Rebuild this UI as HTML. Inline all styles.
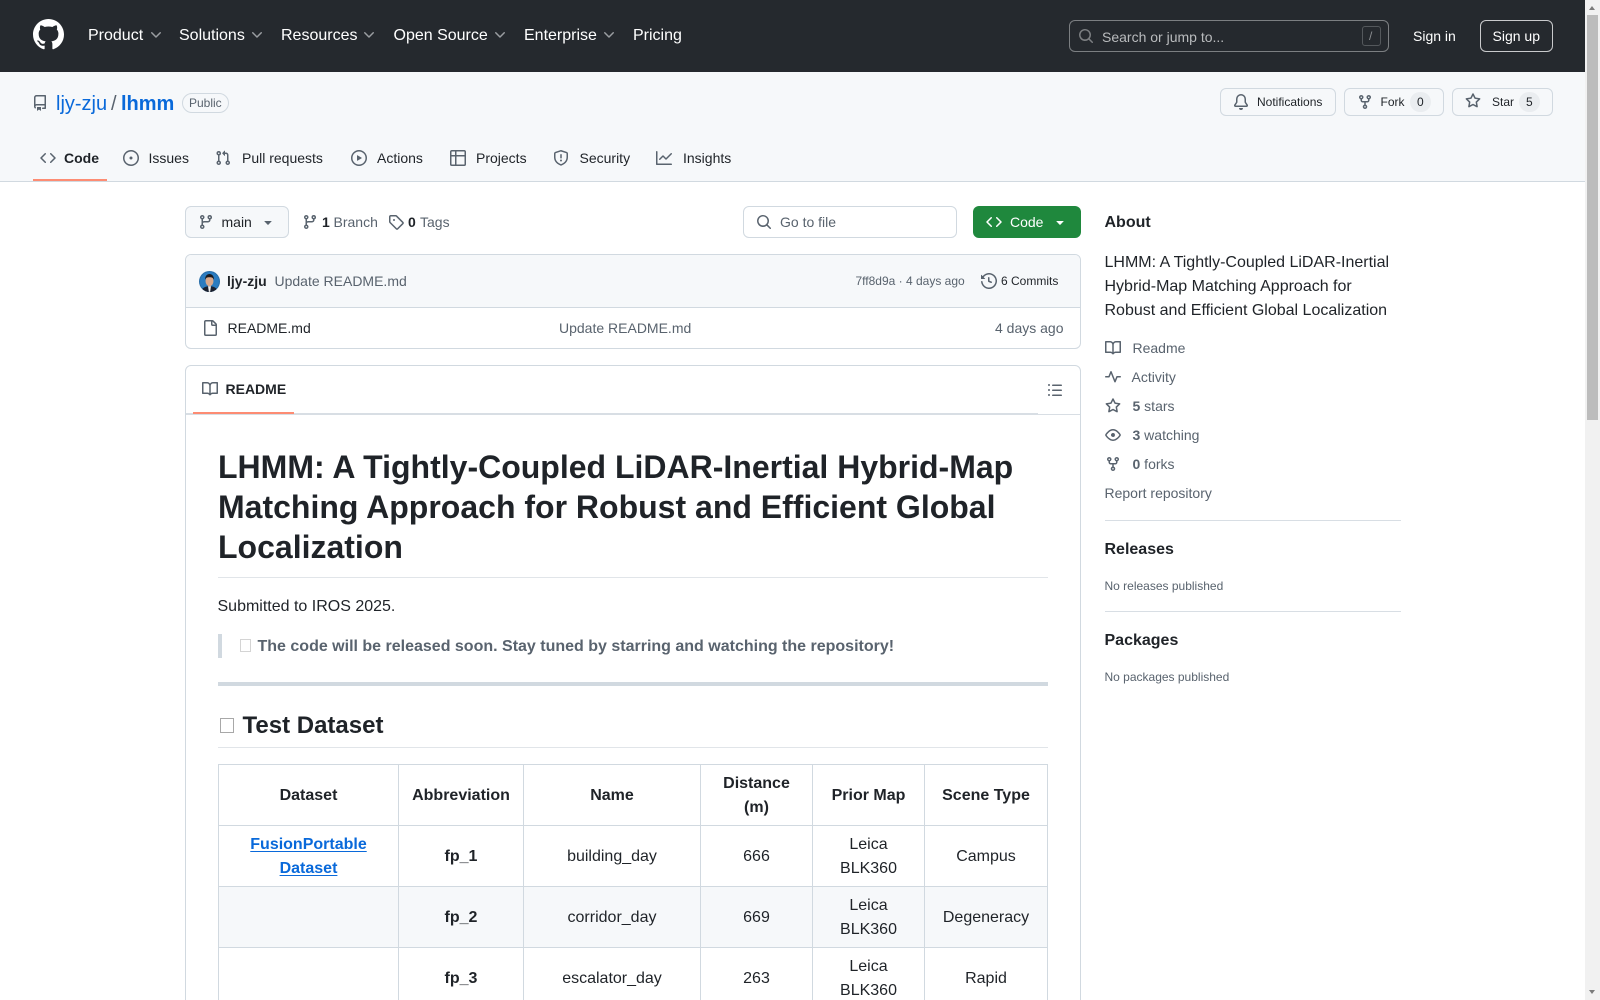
<!DOCTYPE html>
<html lang="en"><head><meta charset="utf-8"><title>ljy-zju/lhmm</title>
<style>
*{box-sizing:border-box}
html,body{margin:0;padding:0;width:1600px;height:1000px;overflow:hidden;background:#fff}
body{font-family:"Liberation Sans",Arial,sans-serif;font-size:14px;color:#1f2328;position:relative}
.t{position:absolute;white-space:nowrap;line-height:20px}
.b{position:absolute}
svg.i{position:absolute;display:block;overflow:visible}
.m{color:#59636e}
.w{font-size:16px;color:#fff}
.s{font-weight:700}
a{color:inherit;text-decoration:none}
.clip{position:absolute;left:0;top:0;width:1600px;height:1000px;overflow:hidden}
table{position:absolute;left:218px;top:764px;width:829px;border-collapse:collapse;table-layout:fixed;font-size:16px;line-height:24px;text-align:center;color:#1f2328}
th,td{border:1px solid #d1d9e0;padding:7px 13px 5px;font-weight:400;overflow:hidden}
th{font-weight:700}
tr.z td{background:#f6f8fa}
table a{color:#0969da;font-weight:700;text-decoration:underline;text-underline-offset:2px}
</style></head><body>
<svg width="0" height="0" style="position:absolute"><defs>
<symbol id="mark" viewBox="0 0 16 16"><path d="M8 0c4.42 0 8 3.58 8 8a8.013 8.013 0 0 1-5.45 7.59c-.4.08-.55-.17-.55-.38 0-.27.01-1.13.01-2.2 0-.75-.25-1.23-.54-1.48 1.78-.2 3.65-.88 3.65-3.95 0-.88-.31-1.59-.82-2.15.08-.2.36-1.02-.08-2.12 0 0-.67-.22-2.2.82-.64-.18-1.32-.27-2-.27-.68 0-1.36.09-2 .27-1.53-1.03-2.2-.82-2.2-.82-.44 1.1-.16 1.92-.08 2.12-.51.56-.82 1.28-.82 2.15 0 3.06 1.86 3.75 3.64 3.95-.23.2-.44.55-.51 1.07-.46.21-1.61.55-2.33-.66-.15-.24-.6-.83-1.23-.82-.67.01-.27.38.01.53.34.19.73.9.82 1.13.16.45.68 1.31 2.69.94 0 .67.01 1.3.01 1.49 0 .21-.15.45-.55.38A7.995 7.995 0 0 1 0 8c0-4.42 3.58-8 8-8Z"/></symbol>
<symbol id="chev" viewBox="0 0 16 16"><path d="M12.78 5.22a.749.749 0 0 1 0 1.06l-4.25 4.25a.749.749 0 0 1-1.06 0L3.22 6.28a.749.749 0 1 1 1.06-1.06L8 8.939l3.72-3.719a.749.749 0 0 1 1.06 0Z"/></symbol>
<symbol id="tri" viewBox="0 0 16 16"><path d="m4.427 7.427 3.396 3.396a.25.25 0 0 0 .354 0l3.396-3.396A.25.25 0 0 0 11.396 7H4.604a.25.25 0 0 0-.177.427Z"/></symbol>
<symbol id="repo" viewBox="0 0 16 16"><path d="M2 2.5A2.5 2.5 0 0 1 4.5 0h8.75a.75.75 0 0 1 .75.75v12.5a.75.75 0 0 1-.75.75h-2.5a.75.75 0 0 1 0-1.5h1.75v-2h-8a1 1 0 0 0-.714 1.7.75.75 0 1 1-1.072 1.05A2.495 2.495 0 0 1 2 11.5Zm10.5-1h-8a1 1 0 0 0-1 1v6.708A2.486 2.486 0 0 1 4.5 9h8ZM5 12.25a.25.25 0 0 1 .25-.25h3.5a.25.25 0 0 1 .25.25v3.25a.25.25 0 0 1-.4.2l-1.45-1.087a.249.249 0 0 0-.3 0L5.4 15.7a.25.25 0 0 1-.4-.2Z"/></symbol>
<symbol id="code" viewBox="0 0 16 16"><path d="m11.28 3.22 4.25 4.25a.75.75 0 0 1 0 1.06l-4.25 4.25a.749.749 0 0 1-1.275-.326.749.749 0 0 1 .215-.734L13.94 8l-3.72-3.72a.749.749 0 0 1 .326-1.275.749.749 0 0 1 .734.215Zm-6.56 0a.751.751 0 0 1 1.042.018.751.751 0 0 1 .018 1.042L2.06 8l3.72 3.72a.749.749 0 0 1-.326 1.275.749.749 0 0 1-.734-.215L.47 8.53a.75.75 0 0 1 0-1.06Z"/></symbol>
<symbol id="issue" viewBox="0 0 16 16"><path d="M8 9.5a1.5 1.5 0 1 0 0-3 1.5 1.5 0 0 0 0 3Z"/><path d="M8 0a8 8 0 1 1 0 16A8 8 0 0 1 8 0ZM1.5 8a6.5 6.5 0 1 0 13 0 6.5 6.5 0 0 0-13 0Z"/></symbol>
<symbol id="pr" viewBox="0 0 16 16"><path d="M1.5 3.25a2.25 2.25 0 1 1 3 2.122v5.256a2.251 2.251 0 1 1-1.5 0V5.372A2.25 2.25 0 0 1 1.5 3.25Zm5.677-.177L9.573.677A.25.25 0 0 1 10 .854V2.5h1A2.5 2.5 0 0 1 13.5 5v5.628a2.251 2.251 0 1 1-1.5 0V5a1 1 0 0 0-1-1h-1v1.646a.25.25 0 0 1-.427.177L7.177 3.427a.25.25 0 0 1 0-.354ZM3.75 2.5a.75.75 0 1 0 0 1.5.75.75 0 0 0 0-1.5Zm0 9.5a.75.75 0 1 0 0 1.5.75.75 0 0 0 0-1.5Zm8.25.75a.75.75 0 1 0 1.5 0 .75.75 0 0 0-1.5 0Z"/></symbol>
<symbol id="play" viewBox="0 0 16 16"><path d="M8 0a8 8 0 1 1 0 16A8 8 0 0 1 8 0ZM1.5 8a6.5 6.5 0 1 0 13 0 6.5 6.5 0 0 0-13 0Zm4.879-2.773 4.264 2.559a.25.25 0 0 1 0 .428l-4.264 2.559A.25.25 0 0 1 6 10.559V5.442a.25.25 0 0 1 .379-.215Z"/></symbol>
<symbol id="table" viewBox="0 0 16 16"><path d="M0 1.75C0 .784.784 0 1.75 0h12.5C15.216 0 16 .784 16 1.75v12.5A1.75 1.75 0 0 1 14.25 16H1.75A1.75 1.75 0 0 1 0 14.25ZM6.5 6.5v8h7.75a.25.25 0 0 0 .25-.25V6.5Zm8-1.5V1.75a.25.25 0 0 0-.25-.25H6.5V5Zm-13 1.5v7.75c0 .138.112.25.25.25H5v-8ZM5 5V1.5H1.75a.25.25 0 0 0-.25.25V5Z"/></symbol>
<symbol id="shield" viewBox="0 0 16 16"><path d="M7.467.133a1.748 1.748 0 0 1 1.066 0l5.25 1.68A1.75 1.75 0 0 1 15 3.48V7c0 1.566-.32 3.182-1.303 4.682-.983 1.498-2.585 2.813-5.032 3.855a1.697 1.697 0 0 1-1.33 0c-2.447-1.042-4.049-2.357-5.032-3.855C1.32 10.182 1 8.566 1 7V3.48a1.75 1.75 0 0 1 1.217-1.667Zm.61 1.429a.25.25 0 0 0-.153 0l-5.25 1.68a.25.25 0 0 0-.174.238V7c0 1.358.275 2.666 1.057 3.86.784 1.194 2.121 2.34 4.366 3.297a.196.196 0 0 0 .154 0c2.245-.956 3.582-2.104 4.366-3.298C13.225 9.666 13.5 8.36 13.5 7V3.48a.251.251 0 0 0-.174-.237l-5.25-1.68ZM8.75 4.75v3a.75.75 0 0 1-1.5 0v-3a.75.75 0 0 1 1.5 0ZM9 10.5a1 1 0 1 1-2 0 1 1 0 0 1 2 0Z"/></symbol>
<symbol id="graph" viewBox="0 0 16 16"><path d="M1.5 1.75V13.5h13.75a.75.75 0 0 1 0 1.5H.75a.75.75 0 0 1-.75-.75V1.75a.75.75 0 0 1 1.5 0Zm14.28 2.53-5.25 5.25a.75.75 0 0 1-1.06 0L7 7.06 4.28 9.78a.751.751 0 0 1-1.042-.018.751.751 0 0 1-.018-1.042l3.25-3.25a.75.75 0 0 1 1.06 0L10 7.94l4.72-4.72a.751.751 0 0 1 1.042.018.751.751 0 0 1 .018 1.042Z"/></symbol>
<symbol id="bell" viewBox="0 0 16 16"><path d="M8 16a2 2 0 0 0 1.985-1.75c.017-.137-.097-.25-.235-.25h-3.5c-.138 0-.252.113-.235.25A2 2 0 0 0 8 16ZM3 5a5 5 0 0 1 10 0v2.947c0 .05.015.098.042.139l1.703 2.555A1.519 1.519 0 0 1 13.482 13H2.518a1.516 1.516 0 0 1-1.263-2.36l1.703-2.554A.255.255 0 0 0 3 7.947Zm5-3.5A3.5 3.5 0 0 0 4.5 5v2.947c0 .346-.102.683-.294.97l-1.703 2.556a.017.017 0 0 0-.003.01l.001.006c0 .002.002.004.004.006l.006.004.007.001h10.964l.007-.001.006-.004.004-.006.001-.007a.017.017 0 0 0-.003-.01l-1.703-2.554a1.745 1.745 0 0 1-.294-.97V5A3.5 3.5 0 0 0 8 1.5Z"/></symbol>
<symbol id="fork" viewBox="0 0 16 16"><path d="M5 5.372v.878c0 .414.336.75.75.75h4.5a.75.75 0 0 0 .75-.75v-.878a2.25 2.25 0 1 1 1.5 0v.878a2.25 2.25 0 0 1-2.25 2.25h-1.5v2.128a2.251 2.251 0 1 1-1.5 0V8.5h-1.5A2.25 2.25 0 0 1 3.5 6.25v-.878a2.25 2.25 0 1 1 1.5 0ZM5 3.25a.75.75 0 1 0-1.5 0 .75.75 0 0 0 1.5 0Zm6.75.75a.75.75 0 1 0 0-1.5.75.75 0 0 0 0 1.5Zm-3 8.75a.75.75 0 1 0-1.5 0 .75.75 0 0 0 1.5 0Z"/></symbol>
<symbol id="star" viewBox="0 0 16 16"><path d="M8 .25a.75.75 0 0 1 .673.418l1.882 3.815 4.21.612a.75.75 0 0 1 .416 1.279l-3.046 2.97.719 4.192a.751.751 0 0 1-1.088.791L8 12.347l-3.766 1.98a.75.75 0 0 1-1.088-.79l.72-4.194L.818 6.374a.75.75 0 0 1 .416-1.28l4.21-.611L7.327.668A.75.75 0 0 1 8 .25Zm0 2.445L6.615 5.5a.75.75 0 0 1-.564.41l-3.097.45 2.24 2.184a.75.75 0 0 1 .216.664l-.528 3.084 2.769-1.456a.75.75 0 0 1 .698 0l2.77 1.456-.53-3.084a.75.75 0 0 1 .216-.664l2.24-2.183-3.096-.45a.75.75 0 0 1-.564-.41L8 2.694Z"/></symbol>
<symbol id="branch" viewBox="0 0 16 16"><path d="M9.5 3.25a2.25 2.25 0 1 1 3 2.122V6A2.5 2.5 0 0 1 10 8.5H6a1 1 0 0 0-1 1v1.128a2.251 2.251 0 1 1-1.5 0V5.372a2.25 2.25 0 1 1 1.5 0v1.836A2.493 2.493 0 0 1 6 7h4a1 1 0 0 0 1-1v-.628A2.25 2.25 0 0 1 9.5 3.25Zm-6 0a.75.75 0 1 0 1.5 0 .75.75 0 0 0-1.5 0Zm8.25-.75a.75.75 0 1 0 0 1.5.75.75 0 0 0 0-1.5ZM4.25 12a.75.75 0 1 0 0 1.5.75.75 0 0 0 0-1.5Z"/></symbol>
<symbol id="tag" viewBox="0 0 16 16"><path d="M1 7.775V2.75C1 1.784 1.784 1 2.75 1h5.025c.464 0 .91.184 1.238.513l6.25 6.25a1.75 1.75 0 0 1 0 2.474l-5.026 5.026a1.75 1.75 0 0 1-2.474 0l-6.25-6.25A1.75 1.75 0 0 1 1 7.775Zm1.5 0c0 .066.026.13.073.177l6.25 6.25a.25.25 0 0 0 .354 0l5.025-5.025a.25.25 0 0 0 0-.354l-6.25-6.25a.25.25 0 0 0-.177-.073H2.75a.25.25 0 0 0-.25.25ZM6 5a1 1 0 1 1 0 2 1 1 0 0 1 0-2Z"/></symbol>
<symbol id="search" viewBox="0 0 16 16"><path d="M10.68 11.74a6 6 0 0 1-7.922-8.982 6 6 0 0 1 8.982 7.922l3.04 3.04a.749.749 0 0 1-.326 1.275.749.749 0 0 1-.734-.215ZM11.5 7a4.499 4.499 0 1 0-8.997 0A4.499 4.499 0 0 0 11.5 7Z"/></symbol>
<symbol id="history" viewBox="0 0 16 16"><path d="m.427 1.927 1.215 1.215a8.002 8.002 0 1 1-1.6 5.685.75.75 0 1 1 1.493-.154 6.5 6.5 0 1 0 1.18-4.458l1.358 1.358A.25.25 0 0 1 3.896 6H.25A.25.25 0 0 1 0 5.75V2.104a.25.25 0 0 1 .427-.177ZM7.75 4a.75.75 0 0 1 .75.75v2.992l2.028.812a.75.75 0 0 1-.557 1.392l-2.5-1A.751.751 0 0 1 7 8.25v-3.5A.75.75 0 0 1 7.75 4Z"/></symbol>
<symbol id="file" viewBox="0 0 16 16"><path d="M2 1.75C2 .784 2.784 0 3.75 0h6.586c.464 0 .909.184 1.237.513l2.914 2.914c.329.328.513.773.513 1.237v9.586A1.75 1.75 0 0 1 13.25 16h-9.5A1.75 1.75 0 0 1 2 14.25Zm1.75-.25a.25.25 0 0 0-.25.25v12.5c0 .138.112.25.25.25h9.5a.25.25 0 0 0 .25-.25V6h-2.75A1.75 1.75 0 0 1 9 4.25V1.5Zm6.75.062V4.25c0 .138.112.25.25.25h2.688l-.011-.013-2.914-2.914-.013-.011Z"/></symbol>
<symbol id="book" viewBox="0 0 16 16"><path d="M0 1.75A.75.75 0 0 1 .75 1h4.253c1.227 0 2.317.59 3 1.501A3.743 3.743 0 0 1 11.006 1h4.245a.75.75 0 0 1 .75.75v10.5a.75.75 0 0 1-.75.75h-4.507a2.25 2.25 0 0 0-1.591.659l-.622.621a.75.75 0 0 1-1.06 0l-.622-.621A2.25 2.25 0 0 0 5.258 13H.75a.75.75 0 0 1-.75-.75Zm7.251 10.324.004-5.073-.002-2.253A2.25 2.25 0 0 0 5.003 2.5H1.5v9h3.757a3.75 3.75 0 0 1 1.994.574ZM8.755 4.75l-.004 7.322a3.752 3.752 0 0 1 1.992-.572H14.5v-9h-3.495a2.25 2.25 0 0 0-2.25 2.25Z"/></symbol>
<symbol id="list" viewBox="0 0 16 16"><path d="M5.75 2.5h8.5a.75.75 0 0 1 0 1.5h-8.5a.75.75 0 0 1 0-1.5Zm0 5h8.5a.75.75 0 0 1 0 1.5h-8.5a.75.75 0 0 1 0-1.5Zm0 5h8.5a.75.75 0 0 1 0 1.5h-8.5a.75.75 0 0 1 0-1.5ZM2 14a1 1 0 1 1 0-2 1 1 0 0 1 0 2Zm1-6a1 1 0 1 1-2 0 1 1 0 0 1 2 0ZM2 4a1 1 0 1 1 0-2 1 1 0 0 1 0 2Z"/></symbol>
<symbol id="pulse" viewBox="0 0 16 16"><path d="M6 2c.306 0 .582.187.696.471L10 10.731l1.304-3.26A.751.751 0 0 1 12 7h3.25a.75.75 0 0 1 0 1.5h-2.742l-1.812 4.528a.751.751 0 0 1-1.392 0L6 4.77 4.696 8.03A.75.75 0 0 1 4 8.5H.75a.75.75 0 0 1 0-1.5h2.742l1.812-4.529A.751.751 0 0 1 6 2Z"/></symbol>
<symbol id="eye" viewBox="0 0 16 16"><path d="M8 2c1.981 0 3.671.992 4.933 2.078 1.27 1.091 2.187 2.345 2.637 3.023a1.62 1.62 0 0 1 0 1.798c-.45.678-1.367 1.932-2.637 3.023C11.67 13.008 9.981 14 8 14c-1.981 0-3.671-.992-4.933-2.078C1.797 10.83.88 9.576.43 8.898a1.62 1.62 0 0 1 0-1.798c.45-.677 1.367-1.931 2.637-3.022C4.33 2.992 6.019 2 8 2ZM1.679 7.932a.12.12 0 0 0 0 .136c.411.622 1.241 1.75 2.366 2.717C5.176 11.758 6.527 12.5 8 12.5c1.473 0 2.825-.742 3.955-1.715 1.124-.967 1.954-2.096 2.366-2.717a.12.12 0 0 0 0-.136c-.412-.621-1.242-1.75-2.366-2.717C10.824 4.242 9.473 3.5 8 3.5c-1.473 0-2.825.742-3.955 1.715-1.124.967-1.954 2.096-2.366 2.717ZM8 10a2 2 0 1 1-.001-3.999A2 2 0 0 1 8 10Z"/></symbol>
</defs></svg>

<div class="clip">
<!-- top nav -->
<div class="b" style="left:0;top:0;width:1585px;height:72px;background:#25292e"></div>
<svg class="i" style="left:33px;top:19px" width="31" height="31" fill="#fff"><use href="#mark"/></svg>
<span class="t w" style="left:88px;top:26px">Product</span>
<svg class="i" style="left:148px;top:27px" width="16" height="16" fill="#9a9da1"><use href="#chev"/></svg>
<span class="t w" style="left:179px;top:26px">Solutions</span>
<svg class="i" style="left:249px;top:27px" width="16" height="16" fill="#9a9da1"><use href="#chev"/></svg>
<span class="t w" style="left:281px;top:26px">Resources</span>
<svg class="i" style="left:361px;top:27px" width="16" height="16" fill="#9a9da1"><use href="#chev"/></svg>
<span class="t w" style="left:393.5px;top:26px">Open Source</span>
<svg class="i" style="left:492px;top:27px" width="16" height="16" fill="#9a9da1"><use href="#chev"/></svg>
<span class="t w" style="left:524px;top:26px">Enterprise</span>
<svg class="i" style="left:601px;top:27px" width="16" height="16" fill="#9a9da1"><use href="#chev"/></svg>
<span class="t w" style="left:633px;top:26px">Pricing</span>

<div class="b" style="left:1069px;top:20px;width:320px;height:32px;border:1px solid #7c7f82;border-radius:6px"></div>
<svg class="i" style="left:1078px;top:28px" width="16" height="16" fill="#7c7f82"><use href="#search"/></svg>
<span class="t" style="left:1102px;top:27px;color:#b9bbbd">Search or jump to...</span>
<div class="b" style="left:1362px;top:26px;width:19px;height:20px;border:1px solid #54585c;border-radius:3px"></div>
<span class="t" style="left:1369px;top:26px;font-size:12px;color:#8d9093">/</span>
<span class="t" style="left:1413px;top:26px;color:#fff">Sign in</span>
<div class="b" style="left:1480px;top:20px;width:73px;height:32px;border:1px solid #c9cacc;border-radius:6px"></div>
<span class="t" style="left:1492.5px;top:26px;color:#fff">Sign up</span>

<!-- repo header -->
<div class="b" style="left:0;top:72px;width:1585px;height:110px;background:#f6f8fa;border-bottom:1px solid #d1d9e0"></div>
<svg class="i" style="left:32px;top:95px" width="16" height="16" fill="#59636e"><use href="#repo"/></svg>
<span class="t" style="left:56px;top:94px;font-size:20px;color:#0969da">ljy-zju</span>
<span class="t m" style="left:111px;top:94px;font-size:20px">/</span>
<span class="t s" style="left:121px;top:94px;font-size:20px;color:#0969da">lhmm</span>
<div class="b" style="left:182px;top:93px;width:47px;height:20px;border:1px solid #d1d9e0;border-radius:10px"></div>
<span class="t m" style="left:189px;top:93px;font-size:12px">Public</span>

<div class="b" style="left:1220px;top:88px;width:116px;height:28px;border:1px solid #d1d9e0;border-radius:6px;background:#f6f8fa"></div>
<svg class="i" style="left:1233px;top:94px" width="16" height="16" fill="#59636e"><use href="#bell"/></svg>
<span class="t" style="left:1257px;top:92px;font-size:12px">Notifications</span>
<div class="b" style="left:1344px;top:88px;width:100px;height:28px;border:1px solid #d1d9e0;border-radius:6px;background:#f6f8fa"></div>
<svg class="i" style="left:1357px;top:94px" width="16" height="16" fill="#59636e"><use href="#fork"/></svg>
<span class="t" style="left:1380.5px;top:92px;font-size:12px">Fork</span>
<div class="b" style="left:1410px;top:92px;width:21px;height:20px;border-radius:10px;background:#eaedf0"></div>
<span class="t" style="left:1417px;top:92px;font-size:12px">0</span>
<div class="b" style="left:1452px;top:88px;width:101px;height:28px;border:1px solid #d1d9e0;border-radius:6px;background:#f6f8fa"></div>
<svg class="i" style="left:1465px;top:93px" width="16" height="16" fill="#59636e"><use href="#star"/></svg>
<span class="t" style="left:1492px;top:92px;font-size:12px">Star</span>
<div class="b" style="left:1519px;top:92px;width:21px;height:20px;border-radius:10px;background:#eaedf0"></div>
<span class="t" style="left:1526px;top:92px;font-size:12px">5</span>

<!-- tabs -->
<svg class="i" style="left:40px;top:150px" width="16" height="16" fill="#59636e"><use href="#code"/></svg>
<span class="t s" style="left:64px;top:148px">Code</span>
<div class="b" style="left:32.5px;top:179px;width:74.5px;height:2px;background:#fd8c73"></div>
<svg class="i" style="left:123px;top:150px" width="16" height="16" fill="#59636e"><use href="#issue"/></svg>
<span class="t" style="left:148.5px;top:148px">Issues</span>
<svg class="i" style="left:215px;top:150px" width="16" height="16" fill="#59636e"><use href="#pr"/></svg>
<span class="t" style="left:242px;top:148px">Pull requests</span>
<svg class="i" style="left:351px;top:150px" width="16" height="16" fill="#59636e"><use href="#play"/></svg>
<span class="t" style="left:377px;top:148px">Actions</span>
<svg class="i" style="left:450px;top:150px" width="16" height="16" fill="#59636e"><use href="#table"/></svg>
<span class="t" style="left:476px;top:148px">Projects</span>
<svg class="i" style="left:553px;top:150px" width="16" height="16" fill="#59636e"><use href="#shield"/></svg>
<span class="t" style="left:579.5px;top:148px">Security</span>
<svg class="i" style="left:656px;top:150px" width="16" height="16" fill="#59636e"><use href="#graph"/></svg>
<span class="t" style="left:683px;top:148px">Insights</span>

<!-- file nav -->
<div class="b" style="left:185px;top:206px;width:104px;height:32px;border:1px solid #d1d9e0;border-radius:6px;background:#f6f8fa"></div>
<svg class="i" style="left:198px;top:214px" width="16" height="16" fill="#59636e"><use href="#branch"/></svg>
<span class="t" style="left:221.5px;top:212px">main</span>
<svg class="i" style="left:260px;top:214px" width="16" height="16" fill="#59636e"><use href="#tri"/></svg>
<svg class="i" style="left:301.5px;top:214px" width="16" height="16" fill="#59636e"><use href="#branch"/></svg>
<span class="t s" style="left:322px;top:212px">1</span>
<span class="t m" style="left:333.5px;top:212px">Branch</span>
<svg class="i" style="left:388px;top:214px" width="16" height="16" fill="#59636e"><use href="#tag"/></svg>
<span class="t s" style="left:408px;top:212px">0</span>
<span class="t m" style="left:420px;top:212px">Tags</span>

<div class="b" style="left:743px;top:206px;width:214px;height:32px;border:1px solid #d1d9e0;border-radius:6px;background:#fff"></div>
<svg class="i" style="left:756px;top:214px" width="16" height="16" fill="#59636e"><use href="#search"/></svg>
<span class="t m" style="left:780px;top:212px">Go to file</span>
<div class="b" style="left:973px;top:206px;width:108px;height:32px;border-radius:6px;background:#1f883d"></div>
<svg class="i" style="left:986px;top:214px" width="16" height="16" fill="#fff"><use href="#code"/></svg>
<span class="t" style="left:1010px;top:212px;color:#fff">Code</span>
<svg class="i" style="left:1052px;top:214px" width="16" height="16" fill="#fff"><use href="#tri"/></svg>

<!-- commit box -->
<div class="b" style="left:185px;top:254px;width:896px;height:95px;border:1px solid #d1d9e0;border-radius:6px;overflow:hidden"><div style="height:53px;background:#f6f8fa;border-bottom:1px solid #d1d9e0"></div></div>
<svg class="i" style="left:198.5px;top:270.5px" width="21" height="21" viewBox="0 0 20 20"><defs><clipPath id="av"><circle cx="10" cy="10" r="10"/></clipPath></defs><g clip-path="url(#av)"><rect width="20" height="20" fill="#2b7cc0"/><path d="M2 21c0-5 4-6.5 8-6.5s8 1.500 8 6.5Z" fill="#1a2130"/><path d="M8.600 14.500h2.800L10.600 20H9.400Z" fill="#f2f2f2"/><ellipse cx="10" cy="9.500" rx="3.800" ry="5" fill="#d9a98c"/><path d="M5.800 8.500C5.600 4.500 8 2.800 10 2.800s4.500 1.700 4.200 5.700c-.8-2-1.700-2.500-4.200-2.500s-3.400.5-4.200 2.500Z" fill="#1a1a1e"/></g><circle cx="10" cy="10" r="9.500" fill="none" stroke="#1f2328" stroke-opacity=".15"/></svg>
<span class="t s" style="left:227px;top:271px">ljy-zju</span>
<span class="t m" style="left:274.5px;top:271px">Update README.md</span>
<span class="t m" style="left:855.5px;top:271px;font-size:12px">7ff8d9a · 4 days ago</span>
<svg class="i" style="left:981px;top:273px" width="16" height="16" fill="#59636e"><use href="#history"/></svg>
<span class="t" style="left:1001px;top:271px;font-size:12px">6 Commits</span>
<svg class="i" style="left:202px;top:320px" width="16" height="16" fill="#59636e"><use href="#file"/></svg>
<span class="t" style="left:227.5px;top:318px">README.md</span>
<span class="t m" style="left:559px;top:318px">Update README.md</span>
<span class="t m" style="left:995px;top:318px">4 days ago</span>

<!-- readme box -->
<div class="b" style="left:185px;top:365px;width:896px;height:700px;border:1px solid #d1d9e0;border-radius:6px 6px 0 0"></div>
<div class="b" style="left:186px;top:413px;width:852px;height:2px;background:#d8dee4"></div>
<div class="b" style="left:1038px;top:414px;width:42px;height:1px;background:#d8dee4"></div>
<div class="b" style="left:193px;top:411.5px;width:101px;height:2px;background:#fd8c73"></div>
<svg class="i" style="left:202px;top:381px" width="16" height="16" fill="#59636e"><use href="#book"/></svg>
<span class="t s" style="left:225.5px;top:379px">README</span>
<svg class="i" style="left:1047px;top:382px" width="16" height="16" fill="#59636e"><use href="#list"/></svg>

<div class="b" style="left:218px;top:447px;width:830px;height:131px;border-bottom:1px solid #e1e5e9;font-size:32px;line-height:40px;font-weight:700;color:#1f2328">LHMM: A Tightly-Coupled LiDAR-Inertial Hybrid-Map Matching Approach for Robust and Efficient Global Localization</div>
<span class="t" style="left:217.5px;top:597px;font-size:16px">Submitted to IROS 2025.</span>
<div class="b" style="left:218px;top:634px;width:4px;height:24px;background:#d1d9e0"></div>
<div class="b" style="left:240px;top:639px;width:11px;height:13px;border:1px solid #d4d4d4"></div>
<span class="t s m" style="left:257.5px;top:637px;font-size:16px">The code will be released soon. Stay tuned by starring and watching the repository!</span>
<div class="b" style="left:218px;top:682px;width:830px;height:4px;background:#d1d9e0"></div>
<div class="b" style="left:220px;top:718px;width:14px;height:15px;border:1px solid #a8a8a8"></div>
<span class="t s" style="left:242.5px;top:714px;font-size:24px;line-height:24px">Test Dataset</span>
<div class="b" style="left:218px;top:747px;width:830px;height:1px;background:#e1e5e9"></div>

<table>
<colgroup><col style="width:180px"><col style="width:125px"><col style="width:177px"><col style="width:112px"><col style="width:112px"><col style="width:123px"></colgroup>
<tr><th>Dataset</th><th>Abbreviation</th><th>Name</th><th>Distance (m)</th><th>Prior Map</th><th>Scene Type</th></tr>
<tr><td><a href="#">FusionPortable Dataset</a></td><td style="font-weight:700">fp_1</td><td>building_day</td><td>666</td><td>Leica BLK360</td><td>Campus</td></tr>
<tr class="z"><td></td><td style="font-weight:700">fp_2</td><td>corridor_day</td><td>669</td><td>Leica BLK360</td><td>Degeneracy</td></tr>
<tr><td></td><td style="font-weight:700">fp_3</td><td>escalator_day</td><td>263</td><td>Leica BLK360</td><td>Rapid</td></tr>
</table>

<!-- sidebar -->
<span class="t s" style="left:1104.5px;top:213px;font-size:16px">About</span>
<div class="b" style="left:1104.5px;top:251px;width:296px;font-size:16px;line-height:24px">LHMM: A Tightly-Coupled LiDAR-Inertial Hybrid-Map Matching Approach for Robust and Efficient Global Localization</div>
<svg class="i" style="left:1105px;top:340px" width="16" height="16" fill="#59636e"><use href="#book"/></svg>
<span class="t m" style="left:1132.5px;top:338px">Readme</span>
<svg class="i" style="left:1105px;top:369px" width="16" height="16" fill="#59636e"><use href="#pulse"/></svg>
<span class="t m" style="left:1131.5px;top:367px">Activity</span>
<svg class="i" style="left:1105px;top:398px" width="16" height="16" fill="#59636e"><use href="#star"/></svg>
<span class="t m" style="left:1132.5px;top:396px"><b>5</b> stars</span>
<svg class="i" style="left:1105px;top:427px" width="16" height="16" fill="#59636e"><use href="#eye"/></svg>
<span class="t m" style="left:1132.5px;top:425px"><b>3</b> watching</span>
<svg class="i" style="left:1105px;top:456px" width="16" height="16" fill="#59636e"><use href="#fork"/></svg>
<span class="t m" style="left:1132.5px;top:454px"><b>0</b> forks</span>
<span class="t m" style="left:1104.5px;top:483px">Report repository</span>
<div class="b" style="left:1104.5px;top:520px;width:296.5px;height:1px;background:#d8dee4"></div>
<span class="t s" style="left:1104.5px;top:538px;font-size:16px;margin-top:2px">Releases</span>
<span class="t m" style="left:1104.5px;top:576px;font-size:12px">No releases published</span>
<div class="b" style="left:1104.5px;top:611px;width:296.5px;height:1px;background:#d8dee4"></div>
<span class="t s" style="left:1104.5px;top:629px;font-size:16px;margin-top:2px">Packages</span>
<span class="t m" style="left:1104.5px;top:667px;font-size:12px">No packages published</span>

<!-- scrollbar -->
<div class="b" style="left:1585px;top:0;width:15px;height:1000px;background:#f1f1f1"></div>
<div class="b" style="left:1587px;top:15px;width:11px;height:405px;background:#bcbcbc"></div>
<div class="b" style="left:1589px;top:6px;width:0;height:0;border-left:3.5px solid transparent;border-right:3.5px solid transparent;border-bottom:4px solid #7a7a7a"></div>
<div class="b" style="left:1589px;top:990px;width:0;height:0;border-left:3.5px solid transparent;border-right:3.5px solid transparent;border-top:4px solid #7a7a7a"></div>
</div>
</body></html>
